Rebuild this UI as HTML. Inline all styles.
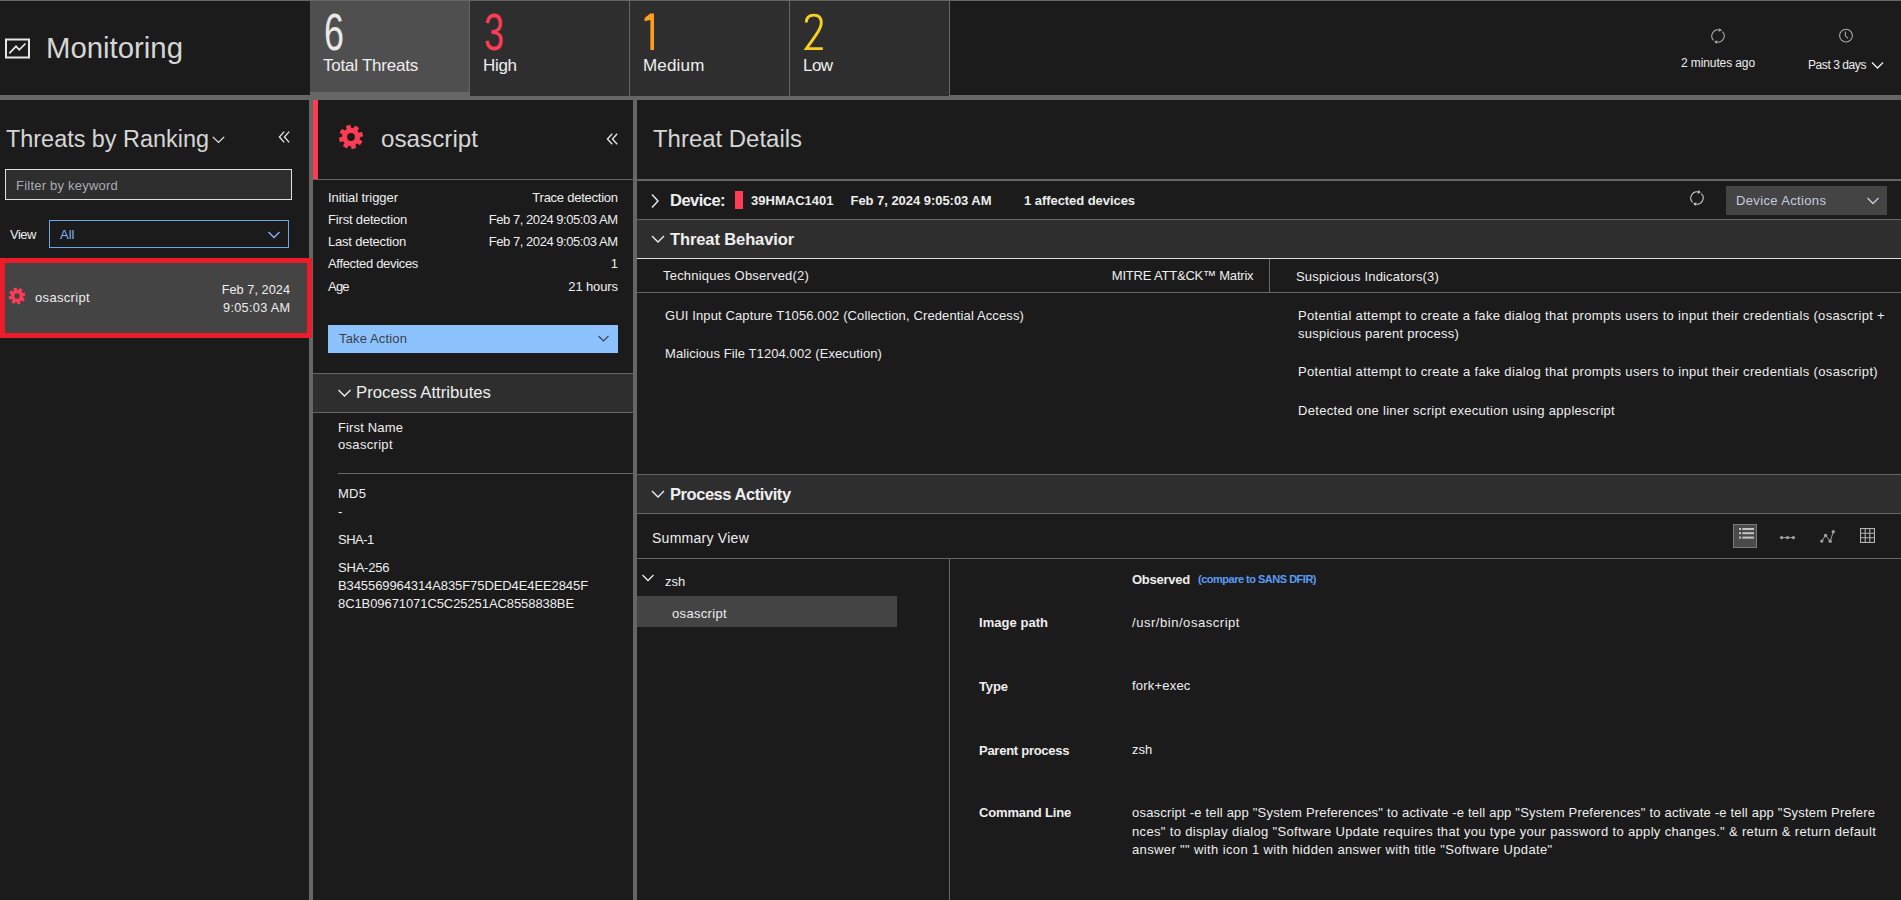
<!DOCTYPE html>
<html><head><meta charset="utf-8"><title>Monitoring</title>
<style>
html,body{margin:0;padding:0;}
body{width:1901px;height:900px;overflow:hidden;background:#1b1b1b;position:relative;font-family:"Liberation Sans",sans-serif;}
.t{position:absolute;white-space:nowrap;line-height:1;}
.num{position:absolute;font-size:52px;line-height:1;transform:scaleX(0.69);transform-origin:0 0;font-weight:normal;}
</style></head><body>
<div style="position:absolute;left:0px;top:0px;width:1901px;height:1px;background:#666;"></div>
<div style="position:absolute;left:0px;top:95px;width:1901px;height:5px;background:#666;"></div>
<svg style="position:absolute;left:5px;top:38px" width="25" height="21" viewBox="0 0 25 21"><rect x="1" y="1.5" width="23" height="18" fill="none" stroke="#e6e6e6" stroke-width="2"/><polyline points="4.3,15.3 11,8.3 14.3,11.8 20.5,5.5" fill="none" stroke="#e6e6e6" stroke-width="1.7"/></svg>
<div class="t" style="left:46px;top:33px;font-size:29.35px;color:#d6d6d6;">Monitoring</div>
<div style="position:absolute;left:310px;top:1px;width:159px;height:91px;background:#4f4f4f;"></div>
<div style="position:absolute;left:469px;top:1px;width:1px;height:95px;background:#666;"></div>
<div class="num" style="left:324px;top:6px;color:#e8e8e8">6</div>
<div class="t" style="left:323px;top:57px;font-size:17px;color:#eee;letter-spacing:-0.227px;">Total Threats</div>
<div style="position:absolute;left:470px;top:1px;width:159px;height:95px;background:#2e2e2e;"></div>
<div style="position:absolute;left:629px;top:1px;width:1px;height:95px;background:#666;"></div>
<div class="num" style="left:484px;top:6px;color:#ff3b55">3</div>
<div class="t" style="left:483px;top:57px;font-size:17px;color:#eee;letter-spacing:-0.315px;">High</div>
<div style="position:absolute;left:630px;top:1px;width:159px;height:95px;background:#2e2e2e;"></div>
<div style="position:absolute;left:789px;top:1px;width:1px;height:95px;background:#666;"></div>
<svg style="position:absolute;left:640px;top:10px" width="20" height="44" viewBox="640 10 20 44"><polygon points="650.2,13.6 654.0,13.6 654.0,50.1 650.4,50.1 650.4,19.9 644.6,21.2 644.6,17.9" fill="#ff9d1c"/></svg>
<div class="t" style="left:643px;top:57px;font-size:17px;color:#eee;letter-spacing:0.174px;">Medium</div>
<div style="position:absolute;left:790px;top:1px;width:159px;height:95px;background:#2e2e2e;"></div>
<div style="position:absolute;left:949px;top:1px;width:1px;height:95px;background:#666;"></div>
<svg style="position:absolute;left:800px;top:10px" width="28" height="44" viewBox="800 10 28 44"><path d="M806.3 22.6C806.3 17 809.4 15.1 813.9 15.1C818.6 15.1 821.3 17.6 821.3 22.6C821.3 28.3 816.5 34.5 806.4 48.6H822.8" fill="none" stroke="#f7d11e" stroke-width="2.9"/></svg>
<div class="t" style="left:803px;top:57px;font-size:17px;color:#eee;letter-spacing:-0.561px;">Low</div>
<div style="position:absolute;left:310px;top:92px;width:159px;height:4px;background:#666;"></div>
<svg style="position:absolute;left:1709px;top:27px" width="18" height="18" viewBox="-1 -1 18 18"><path d="M3.62 12.38A6.2 6.2 0 0 1 9.60 2.01M12.38 3.62A6.2 6.2 0 0 1 6.40 13.99" fill="none" stroke="#a8a8a8" stroke-width="1.1"/><path d="M11.83 2.61L9.54 -0.08L8.51 3.79ZM4.17 13.39L6.46 16.08L7.49 12.21Z" fill="#a8a8a8"/></svg>
<div class="t" style="left:1681px;top:57px;font-size:12px;color:#eee;letter-spacing:-0.106px;">2 minutes ago</div>
<svg style="position:absolute;left:1838px;top:28px" width="16" height="16" viewBox="0 0 16 16"><circle cx="8" cy="7.6" r="6.4" fill="none" stroke="#aaa" stroke-width="1.1"/><path d="M7.4 3.6v4.2l2.6 2.6" fill="none" stroke="#aaa" stroke-width="1.1"/></svg>
<div class="t" style="left:1808px;top:59px;font-size:12px;color:#eee;letter-spacing:-0.427px;">Past 3 days</div>
<svg style="position:absolute;left:1871px;top:61px" width="13" height="9" viewBox="0 0 13 9"><path d="M1 1.5l5.5 5.5 5.5-5.5" fill="none" stroke="#eee" stroke-width="1.3"/></svg>
<div style="position:absolute;left:309px;top:100px;width:4px;height:800px;background:#666;"></div>
<div style="position:absolute;left:633px;top:100px;width:4px;height:800px;background:#666;"></div>
<div class="t" style="left:6px;top:128px;font-size:23.41px;color:#d6d6d6;">Threats by Ranking</div>
<svg style="position:absolute;left:211px;top:134px" width="14" height="10" viewBox="0 0 14 10"><path d="M1.8 2.9L7.5 8.4 13.2 2.9" fill="none" stroke="#e8e8e8" stroke-width="1.3"/></svg>
<svg style="position:absolute;left:277px;top:129px" width="15" height="16" viewBox="0 0 15 16"><path d="M7.2 2.6L2.4 8 7.2 13.4M12.2 2.6L7.4 8 12.2 13.4" fill="none" stroke="#e8e8e8" stroke-width="1.3"/></svg>
<div style="position:absolute;left:5px;top:169px;width:285px;height:29px;background:#2e2e2e;border:1px solid #e0e0e0;"></div>
<div class="t" style="left:16px;top:179px;font-size:13px;color:#a9adb3;letter-spacing:0.221px;">Filter by keyword</div>
<div class="t" style="left:10px;top:228px;font-size:13px;color:#eee;letter-spacing:-0.485px;">View</div>
<div style="position:absolute;left:49px;top:220px;width:238px;height:26px;background:#1b1b1b;border:1px solid #6fa6e6;"></div>
<div class="t" style="left:60px;top:228px;font-size:13px;color:#7fb3f5;letter-spacing:-0.016px;">All</div>
<svg style="position:absolute;left:267px;top:230px" width="14" height="10" viewBox="0 0 14 10"><path d="M1.5 2l5.5 5.5 5.5-5.5" fill="none" stroke="#7fb3f5" stroke-width="1.4"/></svg>
<div style="position:absolute;left:0px;top:258px;width:302px;height:70px;background:#444;border:5px solid #ed1c2b;"></div>
<svg style="position:absolute;left:8px;top:287px" width="18" height="18" viewBox="0 0 26 26"><path fill="#ff3b55" d="M8.64,5.13L7.84,1.94L12.36,0.82L13.16,4.00L15.48,4.35L17.17,1.54L21.16,3.93L19.47,6.75L20.87,8.64L24.06,7.84L25.18,12.36L22.00,13.16L21.65,15.48L24.46,17.17L22.07,21.16L19.25,19.47L17.36,20.87L18.16,24.06L13.64,25.18L12.84,22.00L10.52,21.65L8.83,24.46L4.84,22.07L6.53,19.25L5.13,17.36L1.94,18.16L0.82,13.64L4.00,12.84L4.35,10.52L1.54,8.83L3.93,4.84L6.75,6.53Z"/><circle cx="13" cy="13" r="3.9" fill="#444"/></svg>
<div class="t" style="left:35px;top:291px;font-size:13px;color:#eee;letter-spacing:0.332px;">osascript</div>
<div class="t" style="right:1610.93px;top:284px;font-size:12.7px;color:#eee;letter-spacing:0.066px;">Feb 7, 2024</div>
<div class="t" style="right:1610.69px;top:302px;font-size:12.7px;color:#eee;letter-spacing:0.305px;">9:05:03 AM</div>
<div style="position:absolute;left:313px;top:100px;width:5px;height:79px;background:#ff3b55;"></div>
<div style="position:absolute;left:313px;top:179px;width:320px;height:1px;background:#666;"></div>
<svg style="position:absolute;left:338px;top:124px" width="26" height="26" viewBox="0 0 26 26"><path fill="#ff3b55" d="M8.64,5.13L7.84,1.94L12.36,0.82L13.16,4.00L15.48,4.35L17.17,1.54L21.16,3.93L19.47,6.75L20.87,8.64L24.06,7.84L25.18,12.36L22.00,13.16L21.65,15.48L24.46,17.17L22.07,21.16L19.25,19.47L17.36,20.87L18.16,24.06L13.64,25.18L12.84,22.00L10.52,21.65L8.83,24.46L4.84,22.07L6.53,19.25L5.13,17.36L1.94,18.16L0.82,13.64L4.00,12.84L4.35,10.52L1.54,8.83L3.93,4.84L6.75,6.53Z"/><circle cx="13" cy="13" r="3.9" fill="#1b1b1b"/></svg>
<div class="t" style="left:381px;top:127px;font-size:24.24px;color:#d6d6d6;">osascript</div>
<svg style="position:absolute;left:604px;top:131px" width="15" height="16" viewBox="0 0 15 16"><path d="M8.2 2.7L3.4 8 8.2 13.3M13.2 2.7L8.4 8 13.2 13.3" fill="none" stroke="#e8e8e8" stroke-width="1.3"/></svg>
<div class="t" style="left:328px;top:191px;font-size:13px;color:#eee;letter-spacing:-0.054px;">Initial trigger</div>
<div class="t" style="right:1283.25px;top:191px;font-size:13px;color:#eee;letter-spacing:-0.248px;">Trace detection</div>
<div class="t" style="left:328px;top:213px;font-size:13px;color:#eee;letter-spacing:-0.176px;">First detection</div>
<div class="t" style="right:1283.46px;top:213px;font-size:13px;color:#eee;letter-spacing:-0.457px;">Feb 7, 2024 9:05:03 AM</div>
<div class="t" style="left:328px;top:235px;font-size:13px;color:#eee;letter-spacing:-0.210px;">Last detection</div>
<div class="t" style="right:1283.46px;top:235px;font-size:13px;color:#eee;letter-spacing:-0.457px;">Feb 7, 2024 9:05:03 AM</div>
<div class="t" style="left:328px;top:257px;font-size:13px;color:#eee;letter-spacing:-0.322px;">Affected devices</div>
<div class="t" style="right:1283.73px;top:257px;font-size:13px;color:#eee;letter-spacing:-0.729px;">1</div>
<div class="t" style="left:328px;top:280px;font-size:13px;color:#eee;letter-spacing:-0.777px;">Age</div>
<div class="t" style="right:1283.14px;top:280px;font-size:13px;color:#eee;letter-spacing:-0.136px;">21 hours</div>
<div style="position:absolute;left:328px;top:325px;width:290px;height:28px;background:#8cc3ff;"></div>
<div class="t" style="left:339px;top:332px;font-size:13px;color:#3a3f47;letter-spacing:0.138px;">Take Action</div>
<svg style="position:absolute;left:597px;top:334px" width="13" height="10" viewBox="0 0 13 10"><path d="M1.5 2l5 5 5-5" fill="none" stroke="#3a3f47" stroke-width="1.1"/></svg>
<div style="position:absolute;left:313px;top:373px;width:320px;height:38px;background:#2e2e2e;border-top:1px solid #666;border-bottom:1px solid #666;"></div>
<svg style="position:absolute;left:337px;top:387px" width="15" height="12" viewBox="0 0 15 12"><path d="M1.5 3l6 6 6-6" fill="none" stroke="#eee" stroke-width="1.4"/></svg>
<div class="t" style="left:356px;top:385px;font-size:16.75px;color:#eee;">Process Attributes</div>
<div class="t" style="left:338px;top:421px;font-size:13px;color:#eee;letter-spacing:0.144px;">First Name</div>
<div class="t" style="left:338px;top:438px;font-size:13px;color:#eee;letter-spacing:0.309px;">osascript</div>
<div style="position:absolute;left:338px;top:473px;width:295px;height:1px;background:#666;"></div>
<div class="t" style="left:338px;top:487px;font-size:13px;color:#eee;letter-spacing:0.285px;">MD5</div>
<div class="t" style="left:338px;top:505px;font-size:13px;color:#eee;">-</div>
<div class="t" style="left:338px;top:533px;font-size:13px;color:#eee;letter-spacing:-0.498px;">SHA-1</div>
<div class="t" style="left:338px;top:561px;font-size:13px;color:#eee;letter-spacing:-0.207px;">SHA-256</div>
<div class="t" style="left:338px;top:579px;font-size:13px;color:#eee;letter-spacing:-0.090px;">B345569964314A835F75DED4E4EE2845F</div>
<div class="t" style="left:338px;top:597px;font-size:13px;color:#eee;letter-spacing:-0.081px;">8C1B09671071C5C25251AC8558838BE</div>
<div class="t" style="left:653px;top:127px;font-size:23.94px;color:#d6d6d6;">Threat Details</div>
<div style="position:absolute;left:637px;top:179px;width:1264px;height:2px;background:#666;"></div>
<svg style="position:absolute;left:650px;top:193px" width="10" height="16" viewBox="0 0 10 16"><path d="M2 1.5l6 6.5-6 6.5" fill="none" stroke="#eee" stroke-width="1.4"/></svg>
<div class="t" style="left:670px;top:192px;font-size:16.5px;color:#eee;font-weight:bold;letter-spacing:-0.528px;">Device:</div>
<div style="position:absolute;left:735px;top:191px;width:8px;height:18px;background:#ff3b55;"></div>
<div class="t" style="left:751px;top:194px;font-size:13px;color:#eee;font-weight:bold;letter-spacing:0.013px;">39HMAC1401</div>
<div class="t" style="left:850.5px;top:194px;font-size:13px;color:#eee;font-weight:bold;letter-spacing:-0.039px;">Feb 7, 2024 9:05:03 AM</div>
<div class="t" style="left:1024px;top:194px;font-size:13px;color:#eee;font-weight:bold;letter-spacing:-0.055px;">1 affected devices</div>
<svg style="position:absolute;left:1688px;top:189px" width="18" height="18" viewBox="-1 -1 18 18"><path d="M3.62 12.38A6.2 6.2 0 0 1 9.60 2.01M12.38 3.62A6.2 6.2 0 0 1 6.40 13.99" fill="none" stroke="#c8c8c8" stroke-width="1.1"/><path d="M11.83 2.61L9.54 -0.08L8.51 3.79ZM4.17 13.39L6.46 16.08L7.49 12.21Z" fill="#c8c8c8"/></svg>
<div style="position:absolute;left:1726px;top:186px;width:161px;height:29px;background:#444;"></div>
<div class="t" style="left:1736px;top:194px;font-size:13px;color:#c5cde0;letter-spacing:0.360px;">Device Actions</div>
<svg style="position:absolute;left:1866px;top:196px" width="14" height="10" viewBox="0 0 14 10"><path d="M1.5 2l5.5 5.5 5.5-5.5" fill="none" stroke="#c5cde0" stroke-width="1.3"/></svg>
<div style="position:absolute;left:637px;top:219px;width:1264px;height:1px;background:#666;"></div>
<div style="position:absolute;left:637px;top:220px;width:1264px;height:38px;background:#2e2e2e;"></div>
<div style="position:absolute;left:637px;top:258px;width:1264px;height:1px;background:#ddd;"></div>
<svg style="position:absolute;left:650px;top:233px" width="16" height="12" viewBox="0 0 16 12"><path d="M2 3l6 6 6-6" fill="none" stroke="#eee" stroke-width="1.4"/></svg>
<div class="t" style="left:670px;top:231px;font-size:16.5px;color:#eee;font-weight:bold;letter-spacing:-0.107px;">Threat Behavior</div>
<div class="t" style="left:663px;top:269px;font-size:13px;color:#eee;letter-spacing:0.199px;">Techniques Observed(2)</div>
<div class="t" style="right:647.60px;top:269px;font-size:13px;color:#eee;letter-spacing:-0.203px;">MITRE ATT&amp;CK™ Matrix</div>
<div style="position:absolute;left:1269px;top:259px;width:1px;height:33px;background:#666;"></div>
<div class="t" style="left:1296px;top:270px;font-size:13px;color:#eee;letter-spacing:0.178px;">Suspicious Indicators(3)</div>
<div style="position:absolute;left:637px;top:292px;width:1264px;height:1px;background:#666;"></div>
<div class="t" style="left:665px;top:309px;font-size:13px;color:#eee;letter-spacing:0.125px;">GUI Input Capture T1056.002 (Collection, Credential Access)</div>
<div class="t" style="left:665px;top:347px;font-size:13px;color:#eee;letter-spacing:0.094px;">Malicious File T1204.002 (Execution)</div>
<div class="t" style="left:1298px;top:309px;font-size:13px;color:#eee;letter-spacing:0.339px;">Potential attempt to create a fake dialog that prompts users to input their credentials (osascript +</div>
<div class="t" style="left:1298px;top:327px;font-size:13px;color:#eee;letter-spacing:0.245px;">suspicious parent process)</div>
<div class="t" style="left:1298px;top:365px;font-size:13px;color:#eee;letter-spacing:0.341px;">Potential attempt to create a fake dialog that prompts users to input their credentials (osascript)</div>
<div class="t" style="left:1298px;top:404px;font-size:13px;color:#eee;letter-spacing:0.310px;">Detected one liner script execution using applescript</div>
<div style="position:absolute;left:637px;top:474px;width:1264px;height:1px;background:#666;"></div>
<div style="position:absolute;left:637px;top:475px;width:1264px;height:38px;background:#2e2e2e;"></div>
<div style="position:absolute;left:637px;top:513px;width:1264px;height:1px;background:#666;"></div>
<svg style="position:absolute;left:650px;top:488px" width="16" height="12" viewBox="0 0 16 12"><path d="M2 3l6 6 6-6" fill="none" stroke="#eee" stroke-width="1.4"/></svg>
<div class="t" style="left:670px;top:486px;font-size:16.5px;color:#eee;font-weight:bold;letter-spacing:-0.449px;">Process Activity</div>
<div class="t" style="left:652px;top:531px;font-size:14px;color:#eee;letter-spacing:0.260px;">Summary View</div>
<div style="position:absolute;left:1733px;top:524px;width:22px;height:22px;background:#4a4a4a;border:1px solid #7a7a7a;"></div>
<svg style="position:absolute;left:1733px;top:524px" width="24" height="24" viewBox="0 0 24 24"><g fill="#c4c4c4"><rect x="6" y="4" width="2" height="2"/><rect x="9.3" y="4" width="11.7" height="2"/><rect x="6" y="8.2" width="2" height="2"/><rect x="9.3" y="8.2" width="11.7" height="2"/><rect x="6" y="12.6" width="2" height="2"/><rect x="9.3" y="12.6" width="11.7" height="2"/></g></svg>
<svg style="position:absolute;left:1778px;top:534px" width="18" height="8" viewBox="0 0 18 8"><g fill="#a0a0a0"><circle cx="3.6" cy="3.6" r="1.7"/><circle cx="9.5" cy="3.6" r="1.7"/><circle cx="15.4" cy="3.6" r="1.7"/><rect x="3.6" y="3.1" width="11.8" height="1"/></g></svg>
<svg style="position:absolute;left:1818px;top:528px" width="19" height="17" viewBox="0 0 19 17"><path d="M3.8 13.1L7.6 7.4 12.2 13.3 15.3 3.7" fill="none" stroke="#a0a0a0" stroke-width="1"/><g fill="#a0a0a0"><circle cx="3.8" cy="13.1" r="1.7"/><circle cx="7.6" cy="7.4" r="1.7"/><circle cx="12.2" cy="13.3" r="1.7"/><circle cx="15.3" cy="3.7" r="1.7"/></g></svg>
<svg style="position:absolute;left:1860px;top:528px" width="15" height="15" viewBox="0 0 15 15"><g fill="none" stroke="#b4b4b4" stroke-width="1.1"><rect x="0.55" y="0.55" width="13.9" height="13.9"/><path d="M5.2 0.5v14M9.8 0.5v14M0.5 5.2h14M0.5 9.8h14"/></g></svg>
<div style="position:absolute;left:637px;top:558px;width:1264px;height:1px;background:#666;"></div>
<div style="position:absolute;left:949px;top:559px;width:1px;height:341px;background:#666;"></div>
<svg style="position:absolute;left:641px;top:573px" width="14" height="10" viewBox="0 0 14 10"><path d="M1.5 2l5.5 5.5 5.5-5.5" fill="none" stroke="#eee" stroke-width="1.3"/></svg>
<div class="t" style="left:665px;top:575px;font-size:13px;color:#eee;letter-spacing:-0.010px;">zsh</div>
<div style="position:absolute;left:637px;top:596px;width:260px;height:31px;background:#444;"></div>
<div class="t" style="left:672px;top:607px;font-size:13px;color:#eee;letter-spacing:0.332px;">osascript</div>
<div class="t" style="left:1132px;top:573px;font-size:13px;color:#eee;font-weight:bold;letter-spacing:-0.246px;">Observed</div>
<div class="t" style="left:1198px;top:574px;font-size:11px;color:#5b9cf5;font-weight:bold;letter-spacing:-0.498px;">(compare to SANS DFIR)</div>
<div class="t" style="left:979px;top:616px;font-size:13px;color:#eee;font-weight:bold;letter-spacing:0.038px;">Image path</div>
<div class="t" style="left:1132px;top:616px;font-size:13px;color:#eee;letter-spacing:0.541px;">/usr/bin/osascript</div>
<div class="t" style="left:979px;top:680px;font-size:13px;color:#eee;font-weight:bold;letter-spacing:-0.143px;">Type</div>
<div class="t" style="left:1132px;top:679px;font-size:13px;color:#eee;letter-spacing:0.198px;">fork+exec</div>
<div class="t" style="left:979px;top:744px;font-size:13px;color:#eee;font-weight:bold;letter-spacing:-0.266px;">Parent process</div>
<div class="t" style="left:1132px;top:743px;font-size:13px;color:#eee;letter-spacing:-0.010px;">zsh</div>
<div class="t" style="left:979px;top:806px;font-size:13px;color:#eee;font-weight:bold;letter-spacing:-0.158px;">Command Line</div>
<div class="t" style="left:1132px;top:806px;font-size:13px;color:#eee;letter-spacing:0.202px;">osascript -e tell app "System Preferences" to activate -e tell app "System Preferences" to activate -e tell app "System Prefere</div>
<div class="t" style="left:1132px;top:825px;font-size:13px;color:#eee;letter-spacing:0.335px;">nces" to display dialog "Software Update requires that you type your password to apply changes." &amp; return &amp; return default</div>
<div class="t" style="left:1132px;top:843px;font-size:13px;color:#eee;letter-spacing:0.372px;">answer "" with icon 1 with hidden answer with title "Software Update"</div>
</body></html>
